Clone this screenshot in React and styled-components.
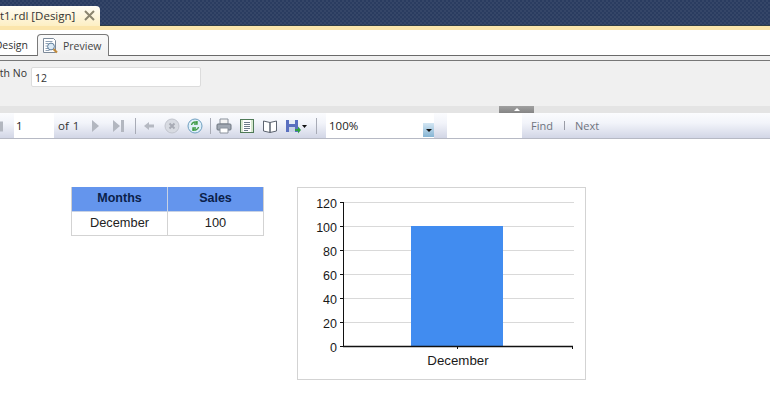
import React from "react";
import styled, { createGlobalStyle } from "styled-components";

const Global = createGlobalStyle`
  html, body { margin: 0; padding: 0; background: #fff; }
  body { width: 770px; height: 404px; overflow: hidden; font-family: "Liberation Sans", Arial, sans-serif; }
  #root { width: 770px; height: 404px; overflow: hidden; }
`;

const Page = styled.div`
  width: 770px; height: 404px; display: flex; flex-direction: column; overflow: hidden; background: #fff;
`;
const DocBar = styled.div`
  height: 26px; flex: none; display: flex; align-items: flex-end; box-sizing: border-box;
  background-color: #2a3c60;
  background-image: conic-gradient(rgba(255,255,255,.05) 25%, transparent 0 50%, rgba(255,255,255,.05) 0 75%, transparent 0);
  background-size: 4px 4px;
  box-shadow: inset 0 -1px 0 #2f3d45;
`;
const DocTab = styled.div`
  width: 100px; height: 20px; box-sizing: border-box; display: flex; align-items: center; justify-content: space-between;
  padding: 0 5px 1px 0; background: linear-gradient(#fffdf6, #fdefc4); border-top-right-radius: 4px;
  font: 11.5px "Open Sans", sans-serif; color: #333; white-space: nowrap;
`;
const CloseMark = styled.svg` width: 11px; height: 11px; flex: none; `;
const YellowStrip = styled.div` height: 4px; flex: none; background: #fbe5ab; `;
const TabStrip = styled.div`
  height: 26px; flex: none; box-sizing: border-box; background: #fff; border-bottom: 1px solid #6a6a6a;
  display: flex; align-items: flex-end;
`;
const ViewLabel = styled.div`
  width: 37px; height: 20px; box-sizing: border-box; display: flex; align-items: center; justify-content: flex-end; padding: 0 9px 0 0;
  font: 10.5px "Open Sans", sans-serif; color: #333;
`;
const ViewTab = styled.div`
  width: 72px; height: 22px; margin-bottom: -1px; box-sizing: border-box; display: flex; align-items: center; gap: 5px; padding-left: 4px;
  background: linear-gradient(#fafafa, #f0f0f0); border: 1px solid #7a7a7a; border-bottom: 0; border-radius: 4px 4px 0 0;
  font: 10.5px "Open Sans", sans-serif; color: #444;
`;
const Gap = styled.div` height: 5px; flex: none; box-sizing: border-box; background: #f0f0f0; border-bottom: 1px solid #777; `;
const Params = styled.div`
  height: 45px; flex: none; box-sizing: border-box; background: #f0f0f0; display: flex; align-items: flex-start; padding-top: 6px;
`;
const ParamLabel = styled.div`
  width: 31px; height: 14px; box-sizing: border-box; text-align: right; padding-right: 4px; white-space: nowrap; margin-top: -1px;
  font: 10.5px/14px "Open Sans", sans-serif; color: #333; direction: rtl;
`;
const ParamInput = styled.div`
  width: 170px; height: 20px; box-sizing: border-box; border: 1px solid #dcdcdc; background: #fff; border-radius: 2px;
  padding-left: 3px; font: 10.5px/20px "Open Sans", sans-serif; color: #333;
`;
const Splitter = styled.div`
  height: 7px; flex: none; background: #e4e4e4; position: relative;
`;
const Handle = styled.div`
  position: absolute; left: 499px; top: 0; width: 35px; height: 7px; background: linear-gradient(#a0a0a0, #858585);
  display: flex; justify-content: center; align-items: center;
  &::after { content: ""; border-left: 3px solid transparent; border-right: 3px solid transparent; border-bottom: 3px solid #fff; }
`;
const Toolbar = styled.div`
  height: 26px; flex: none; box-sizing: border-box; display: flex; align-items: stretch;
  background: linear-gradient(#fbfcfe 0%, #f2f4fa 40%, #d2d6e6 100%); border-bottom: 1px solid #b6b9c4;
  font: 11.5px "Open Sans", sans-serif; color: #444;
`;
const PageBox = styled.div`
  width: 40px; background: #fff; padding-left: 2px; line-height: 25px; font-size: 11.5px; box-sizing: border-box; color: #222;
`;
const OfText = styled.div` width: 35px; padding-left: 4px; box-sizing: border-box; line-height: 25px; white-space: nowrap; word-spacing: 1px; color: #333; `;
const Tools = styled.div` display: flex; align-items: center; width: 237px; `;
const ToolIcon = styled.svg`
  width: ${p => p.$w || 16}px; height: 16px; flex: none; margin-left: ${p => p.$ml || 0}px; display: block; align-self: center;
`;
const Sep = styled.div` width: 1px; height: 16px; background: #a8abb6; flex: none; margin-left: ${p => p.$l || 4}px; `;
const ZoomBox = styled.div`
  width: 108px; background: #fff; box-sizing: border-box; display: flex; justify-content: space-between; align-items: center;
  padding-left: 3px; font-size: 11.5px; color: #222;
`;
const ZoomArrow = styled.div`
  width: 11px; height: 14px; margin-top: 9px; background: linear-gradient(#d3e6f3, #86b5d4); display: flex; align-items: center; justify-content: center;
  &::after { content: ""; border-left: 3px solid transparent; border-right: 3px solid transparent; border-top: 3px solid #111; }
`;
const FindBox = styled.div` width: 75px; margin-left: 13px; background: #fff; `;
const FindLinks = styled.div`
  display: flex; align-items: center; padding-left: 9px; color: #6f7480; font-size: 11px; line-height: 25px;
`;
const LinkSep = styled.div` width: 1px; height: 9px; background: #9a9ca6; margin: 0 10px 0 11px; `;
const Report = styled.div`
  flex: 1; position: relative; background: #fff;
`;
const DataTable = styled.table`
  position: absolute; left: 71px; top: 48px; width: 193px; border-collapse: collapse; table-layout: fixed;
  font-family: "Liberation Sans", Arial, sans-serif; color: #222;
`;
const Th = styled.th`
  height: 24px; padding: 0 0 2px; box-sizing: border-box; background: #6495ed; color: #0b1f4a; font-size: 12.5px; font-weight: bold;
  border: 1px solid #c8d2e4; border-width: 0 1px 1px 0; &:first-child { border-left: 1px solid #d0d0d0; } &:last-child { border-right: 1px solid #d0d0d0; }
`;
const Td = styled.td`
  height: 24px; padding: 0 0 2px; box-sizing: border-box; text-align: center; border: 1px solid #d3d3d3; font-size: 12.8px;
`;
const ChartBox = styled.svg`
  position: absolute; left: 297px; top: 48px; width: 289px; height: 193px; display: block;
`;
const AxisText = styled.text`
  font: ${p => p.$size || 12.5}px "Liberation Sans", Arial, sans-serif; fill: #1a1a1a;
`;

const ticks = [120, 100, 80, 60, 40, 20, 0];

function Chart() {
  return (
    <ChartBox viewBox="0 0 289 193">
      <rect x="0.5" y="0.5" width="288" height="192" fill="#fff" stroke="#d3d3d3" />
      {ticks.map((t, i) => {
        const y = 15.5 + i * 24;
        return (
          <g key={t}>
            {t !== 0 && <line x1="47" x2="277" y1={y} y2={y} stroke="#d9d9d9" />}
            <line x1="43" x2="47" y1={y} y2={y} stroke="#111" />
            <AxisText x="40" y={y + 5} textAnchor="end">{t}</AxisText>
          </g>
        );
      })}
      <rect x="114" y="39" width="92" height="120" fill="#418cf0" />
      <line x1="46.5" x2="46.5" y1="15" y2="160" stroke="#111" />
      <line x1="46" x2="276" y1="159.5" y2="159.5" stroke="#111" strokeWidth="1.3" />
      <line x1="160.5" x2="160.5" y1="159" y2="162" stroke="#111" />
      <line x1="275.5" x2="275.5" y1="159" y2="162" stroke="#111" />
      <AxisText $size={13.3} x="161" y="178" textAnchor="middle">December</AxisText>
    </ChartBox>
  );
}

export default function App() {
  return (
    <Page>
      <Global />
      <DocBar>
        <DocTab>
          <span>t1.rdl [Design]</span>
          <CloseMark viewBox="0 0 11 11"><path d="M1 1l9 9M10 1l-9 9" stroke="#8b8570" strokeWidth="2" /></CloseMark>
        </DocTab>
      </DocBar>
      <YellowStrip />
      <TabStrip>
        <ViewLabel>Design</ViewLabel>
        <ViewTab>
          <ToolIcon viewBox="0 0 16 16">
            <path d="M1.5.5h10l2 2v12h-12z" fill="#fff" stroke="#7d8a99" />
            <path d="M3.5 3.5h7M3.5 5.5h3M3.5 8h2M3.5 10.5h3M3.5 12.5h4" stroke="#8fa1b4" />
            <circle cx="9" cy="8.5" r="3.4" fill="#dbeaf6" stroke="#5d7c99" />
            <path d="M11.5 11l3.5 3.5" stroke="#c08a3c" strokeWidth="2.2" />
          </ToolIcon>
          Preview
        </ViewTab>
      </TabStrip>
      <Gap />
      <Params>
        <ParamLabel>th No</ParamLabel>
        <ParamInput>12</ParamInput>
      </Params>
      <Splitter><Handle /></Splitter>
      <Toolbar>
        <ToolIcon viewBox="0 0 14 16" $w={14}><path d="M0 3.5h3v10H0z" fill="#b3b7c0" /></ToolIcon>
        <PageBox>1</PageBox>
        <OfText>of 1</OfText>
        <Tools>
          <ToolIcon viewBox="0 0 16 16"><path d="M3 2l7 6-7 6z" fill="#b3b7c0" /></ToolIcon>
          <ToolIcon viewBox="0 0 16 16" $ml={5}><path d="M3 2l7 6-7 6zM11 2h3v12h-3z" fill="#b3b7c0" /></ToolIcon>
          <Sep $l={9} />
          <ToolIcon viewBox="0 0 16 16" $ml={5}><path d="M3 8l5-4v2.5h5v3H8V12z" fill="#b5b9c2" /></ToolIcon>
          <ToolIcon viewBox="0 0 16 16" $ml={7}>
            <circle cx="8" cy="8" r="7" fill="#d8dbe2" stroke="#c2c5ce" />
            <path d="M5.5 5.5l5 5M10.5 5.5l-5 5" stroke="#a8abb5" strokeWidth="2" />
          </ToolIcon>
          <ToolIcon viewBox="0 0 16 16" $ml={7}>
            <circle cx="8" cy="8" r="7" fill="#dff0fa" stroke="#6f9fc0" />
            <path d="M4.5 7A3.6 3.6 0 0 1 10.5 5M10 3v3H7" fill="none" stroke="#3b9a45" strokeWidth="1.4" />
            <path d="M11.5 9A3.6 3.6 0 0 1 5.5 11M6 13v-3h3" fill="none" stroke="#3b9a45" strokeWidth="1.4" />
          </ToolIcon>
          <Sep $l={7} />
          <ToolIcon viewBox="0 0 16 16" $ml={5}>
            <path d="M4 1h8v5H4z" fill="#f4f4f4" stroke="#8b929c" />
            <rect x="1" y="6" width="14" height="6" rx="1" fill="#a0a7b1" stroke="#6e7680" />
            <path d="M4 10h8v5H4z" fill="#fff" stroke="#8b929c" />
          </ToolIcon>
          <ToolIcon viewBox="0 0 16 16" $ml={7}>
            <rect x="1.5" y="1.5" width="13" height="13" fill="#d7e8cf" stroke="#4f7a57" />
            <path d="M4 2h8v12H4z" fill="#fff" />
            <path d="M5 4.5h6M5 6.5h6M5 8.5h6M5 10.5h6M5 12.5h4" stroke="#6c7b88" />
          </ToolIcon>
          <ToolIcon viewBox="0 0 16 16" $ml={7}>
            <path d="M1.5 3L8 4.5v10L1.5 13zM8 4.5L14.5 3v10L8 14.5z" fill="#fff" stroke="#5d6470" />
          </ToolIcon>
          <ToolIcon viewBox="0 0 16 16" $ml={7}>
            <path d="M1 2h12v12H1z" fill="#5a70c0" />
            <path d="M4 2h6v4H4z" fill="#e8edf6" />
            <path d="M4 9h6v5H4z" fill="#c9d3e8" />
            <path d="M10 11h3V8.5l3 3.5-3 3.5V13h-3z" fill="#2f9e44" />
          </ToolIcon>
          <ToolIcon viewBox="0 0 8 16" $w={8}><path d="M1 7h5l-2.5 3z" fill="#111" /></ToolIcon>
          <Sep $l={7} />
        </Tools>
        <ZoomBox>
          <span>100%</span>
          <ZoomArrow />
        </ZoomBox>
        <FindBox />
        <FindLinks>Find<LinkSep />Next</FindLinks>
      </Toolbar>
      <Report>
        <DataTable>
          <colgroup><col style={{ width: 96 }} /><col /></colgroup>
          <thead><tr><Th>Months</Th><Th>Sales</Th></tr></thead>
          <tbody><tr><Td>December</Td><Td>100</Td></tr></tbody>
        </DataTable>
        <Chart />
      </Report>
    </Page>
  );
}
